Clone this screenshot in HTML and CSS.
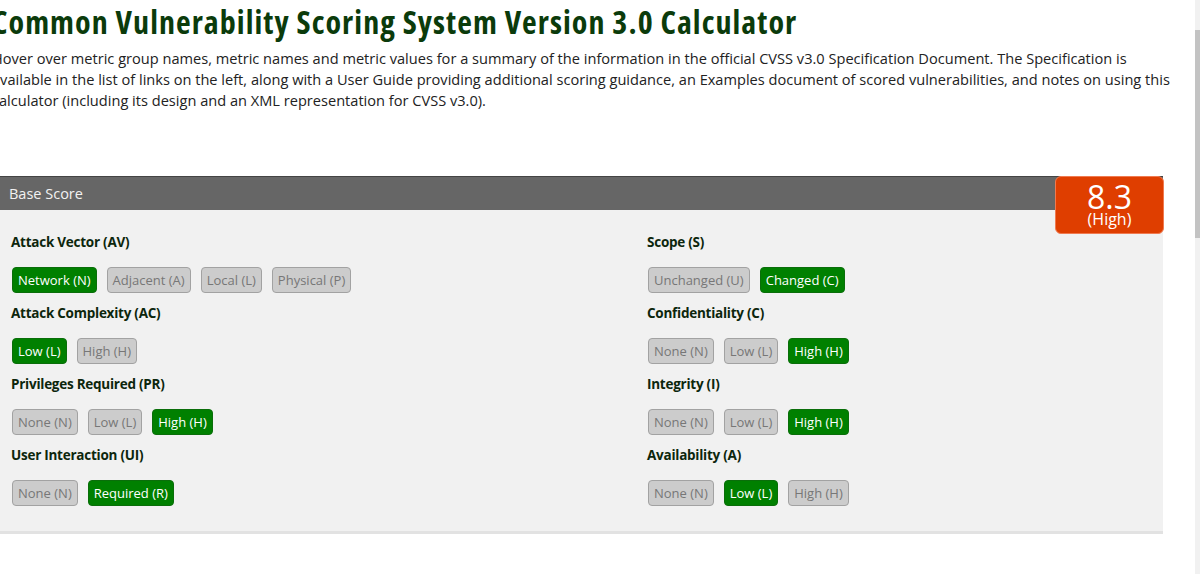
FILE: index.html
```html
<!DOCTYPE html>
<html lang="en">
<head>
<meta charset="utf-8">
<title>CVSS v3.0 Calculator</title>
<link rel="stylesheet" href="styles.css">
</head>
<body>
<div class="page">
  <h1 class="title">Common Vulnerability Scoring System Version 3.0 Calculator</h1>
  <p class="intro">Hover over metric group names, metric names and metric values for a summary of the information in the official CVSS v3.0 Specification Document. The Specification is available in the list of links on the left, along with a User Guide providing additional scoring guidance, an Examples document of scored vulnerabilities, and notes on using this calculator (including its design and an XML representation for CVSS v3.0).</p>

  <section class="panel">
    <div class="panel-head">Base Score</div>
    <div class="score">
      <span class="score-num">8.3</span>
      <span class="score-sev">(High)</span>
    </div>
    <div class="panel-body">
      <div class="col">
        <div class="metric">
          <div class="metric-name">Attack Vector (AV)</div>
          <div class="opts">
            <span class="btn on">Network (N)</span>
            <span class="btn">Adjacent (A)</span>
            <span class="btn">Local (L)</span>
            <span class="btn">Physical (P)</span>
          </div>
        </div>
        <div class="metric">
          <div class="metric-name">Attack Complexity (AC)</div>
          <div class="opts">
            <span class="btn on">Low (L)</span>
            <span class="btn">High (H)</span>
          </div>
        </div>
        <div class="metric">
          <div class="metric-name">Privileges Required (PR)</div>
          <div class="opts">
            <span class="btn">None (N)</span>
            <span class="btn">Low (L)</span>
            <span class="btn on">High (H)</span>
          </div>
        </div>
        <div class="metric">
          <div class="metric-name">User Interaction (UI)</div>
          <div class="opts">
            <span class="btn">None (N)</span>
            <span class="btn on">Required (R)</span>
          </div>
        </div>
      </div>
      <div class="col">
        <div class="metric">
          <div class="metric-name">Scope (S)</div>
          <div class="opts">
            <span class="btn">Unchanged (U)</span>
            <span class="btn on">Changed (C)</span>
          </div>
        </div>
        <div class="metric">
          <div class="metric-name">Confidentiality (C)</div>
          <div class="opts">
            <span class="btn">None (N)</span>
            <span class="btn">Low (L)</span>
            <span class="btn on">High (H)</span>
          </div>
        </div>
        <div class="metric">
          <div class="metric-name">Integrity (I)</div>
          <div class="opts">
            <span class="btn">None (N)</span>
            <span class="btn">Low (L)</span>
            <span class="btn on">High (H)</span>
          </div>
        </div>
        <div class="metric">
          <div class="metric-name">Availability (A)</div>
          <div class="opts">
            <span class="btn">None (N)</span>
            <span class="btn on">Low (L)</span>
            <span class="btn">High (H)</span>
          </div>
        </div>
      </div>
    </div>
  </section>
</div>
<div class="scrollbar"><div class="thumb"></div></div>
</body>
</html>
```

FILE: styles.css
```css
html, body {
  margin: 0;
  padding: 0;
  background: #ffffff;
  overflow: hidden;
}
body {
  font-family: "Open Sans", "Noto Sans", sans-serif;
  color: #222;
  position: relative;
  height: 574px;
}
.page {
  width: 1180px;
  margin-left: -8px;
}
.title {
  margin: 0;
  padding-top: 2px;
  font-size: 32px;
  line-height: 40px;
  font-weight: 700;
  font-stretch: 75%;
  letter-spacing: 1.05px;
  color: #0b3b0b;
}
.intro {
  margin: 6px 0 0;
  font-size: 14.6px;
  line-height: 21px;
  color: #222;
}
.panel {
  position: relative;
  margin: 65px 9px 0 0;
  background: #f1f1f1;
  border-bottom: 3px solid #e2e2e2;
}
.panel-head {
  height: 33px;
  line-height: 33px;
  background: #666666;
  border-top: 1px solid #444444;
  color: #f2f2f2;
  font-size: 14.5px;
  padding-left: 17px;
}
.score {
  position: absolute;
  right: -1px;
  top: 0;
  width: 107px;
  height: 56px;
  background: #df3e00;
  border: 1px solid #f07a50;
  border-radius: 6px;
  color: #ffffff;
  display: flex;
  flex-direction: column;
  align-items: center;
}
.score-num {
  font-size: 32px;
  line-height: 26px;
  margin-top: 7px;
}
.score-sev {
  font-size: 16px;
  line-height: 18px;
}
.panel-body {
  display: grid;
  grid-template-columns: 636px 1fr;
  padding: 22px 0 15px 19px;
}
.metric {
  padding-bottom: 10px;
}
.metric-name {
  font-size: 13.5px;
  line-height: 20px;
  font-weight: 700;
  letter-spacing: -0.25px;
  color: #0c260c;
  margin-bottom: 15px;
}
.opts {
  display: flex;
  gap: 10px;
  padding-left: 1px;
}
.btn {
  display: inline-block;
  font-size: 13px;
  line-height: 18px;
  padding: 3px 5px;
  border: 1px solid #a2a2a2;
  border-radius: 4px;
  background: #cccccc;
  color: #777777;
}
.btn.on {
  background: #008000;
  border-color: #0a6e0a;
  color: #ffffff;
}
.scrollbar {
  position: absolute;
  top: 0;
  right: 0;
  width: 5px;
  height: 574px;
  background: #f1f1f1;
}
.thumb {
  margin-top: 30px;
  height: 208px;
  background: #c3c3c3;
}
```
